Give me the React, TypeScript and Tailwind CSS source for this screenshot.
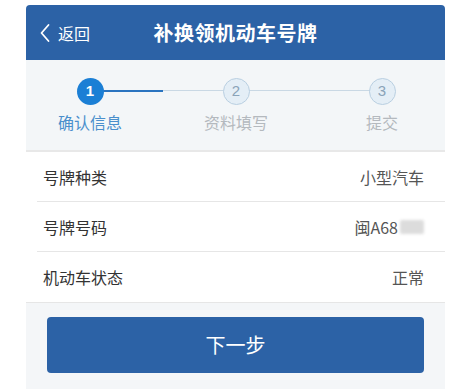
import React from "react";

const font = { fontFamily: '"Noto Sans CJK SC", "Noto Sans", sans-serif' };

function Row({ label, value, blur, last }: { label: string; value: string; blur?: boolean; last?: boolean }) {
  return (
    <div className="pl-[11px]">
      <div className={`flex h-[50px] items-center justify-between pl-[6px] pr-[21px] ${last ? "" : "border-b border-[#e6e6e6]"}`}>
        <span className="text-[16px] text-[#333333]">{label}</span>
        <span className="flex items-center text-[16px] text-[#555555]">
          {value}
          {blur && <span className="ml-[2px] inline-block h-[14px] w-[24px] rounded-[2px] bg-[#dcdcdc] blur-[1.5px]" />}
        </span>
      </div>
    </div>
  );
}

export default function App() {
  return (
    <div className="min-h-[391px] w-[474px] bg-white pt-[5px]" style={font}>
      <div className="ml-[26px] w-[419px]">
        {/* Header */}
        <div className="relative flex h-[55px] items-center rounded-t-[4px] bg-[#2c62a6] text-white">
          <div className="flex items-center pl-[13px]">
            <svg width="12" height="20" viewBox="0 0 12 20" fill="none">
              <path d="M9.5 2 L2.5 10 L9.5 18" stroke="white" strokeWidth="1.8" strokeLinecap="round" strokeLinejoin="round" />
            </svg>
            <span className="ml-[7px] text-[16px]">返回</span>
          </div>
          <div className="absolute inset-0 flex items-center justify-center">
            <span className="text-[20px] font-bold tracking-[0.5px]">补换领机动车号牌</span>
          </div>
        </div>

        {/* Steps */}
        <div className="relative h-[90px] bg-[#f3f6f8]">
          <div className="absolute left-[77px] top-[30px] h-[2px] w-[60px] bg-[#2a74c0]" />
          <div className="absolute left-[137px] top-[30px] h-[1px] w-[60px] bg-[#c9d8e4]" />
          <div className="absolute left-[222px] top-[30px] h-[1px] w-[122px] bg-[#c9d8e4]" />
          <div className="relative flex gap-[66px] pl-[24px] pt-[18px]">
            <div className="flex w-[80px] flex-col items-center">
              <div className="flex h-[27px] w-[27px] items-center justify-center rounded-full bg-[#1b7fd5] text-[15px] font-bold text-white" style={{ fontFamily: '"Liberation Sans", sans-serif' }}>1</div>
              <span className="mt-[5px] text-[16px] text-[#4a8fcc]">确认信息</span>
            </div>
            <div className="flex w-[80px] flex-col items-center">
              <div className="flex h-[27px] w-[27px] items-center justify-center rounded-full border border-[#b9cfe1] bg-[#e4eef6] text-[15px] text-[#8aa3b8]" style={{ fontFamily: '"Liberation Sans", sans-serif' }}>2</div>
              <span className="mt-[5px] text-[16px] text-[#b4b9be]">资料填写</span>
            </div>
            <div className="flex w-[80px] flex-col items-center">
              <div className="flex h-[27px] w-[27px] items-center justify-center rounded-full border border-[#b9cfe1] bg-[#e4eef6] text-[15px] text-[#8aa3b8]" style={{ fontFamily: '"Liberation Sans", sans-serif' }}>3</div>
              <span className="mt-[5px] text-[16px] text-[#b4b9be]">提交</span>
            </div>
          </div>
        </div>

        {/* Rows */}
        <div className="border-t-2 border-[#e8e8e8] bg-white">
          <Row label="号牌种类" value="小型汽车" />
          <Row label="号牌号码" value="闽A68" blur />
          <Row label="机动车状态" value="正常" last />
        </div>

        {/* Bottom */}
        <div className="border-t border-[#e6e6e6] bg-[#f4f6f8] px-[21px] pb-[16px] pt-[14px]">
          <button className="flex h-[56px] w-full items-center justify-center rounded-[4px] bg-[#2c62a6] text-[20px] text-white">
            下一步
          </button>
        </div>
      </div>
    </div>
  );
}
